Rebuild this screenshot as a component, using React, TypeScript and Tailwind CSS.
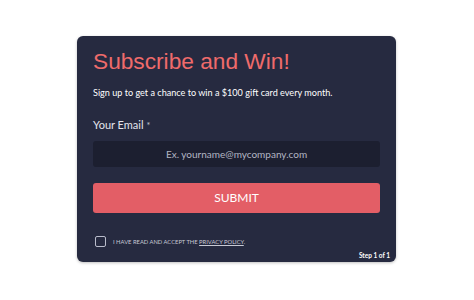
import React, { useState } from 'react';

export default function App() {
  const [checked, setChecked] = useState(false);

  return (
    <div className="w-[474px] h-[300px] bg-white pt-[36px] pl-[77px]">
      <div className="w-[319px] h-[226px] rounded-[6px] bg-[#262a40] shadow-[0_1px_3px_rgba(0,0,0,0.25)] px-[16px] pt-[11px] flex flex-col">
        <h1 className="font-['Liberation_Sans',Arial,sans-serif] text-[22.7px] leading-[28px] text-[#ef6b6b]">
          Subscribe and Win!
        </h1>
        <p className="mt-[12px] font-['Lato',sans-serif] text-[9.1px] leading-[12px] text-white">
          Sign up to get a chance to win a $100 gift card every month.
        </p>
        <label className="mt-[19px] font-['Lato',sans-serif] text-[11px] leading-[14px] text-[#e4e5ec]">
          Your Email <span className="text-[#c4c6d2] text-[9px]">*</span>
        </label>
        <div className="mt-[8px] h-[26px] rounded-[3px] bg-[#1c1f30] flex items-center justify-center">
          <span className="font-['Lato',sans-serif] text-[10px] text-[#b3b6c4]">Ex. yourname@mycompany.com</span>
        </div>
        <button className="mt-[16px] h-[30px] rounded-[3px] bg-[#e35e66] flex items-center justify-center font-['Lato',sans-serif] text-[12px] text-white">
          SUBMIT
        </button>
        <div className="mt-[23px] flex items-center gap-[7px] pl-[2px]">
          <button
            onClick={() => setChecked(!checked)}
            className="w-[11px] h-[11px] rounded-[2px] border border-[#b9bccb]"
          />
          <span className="font-['Lato',sans-serif] text-[5.8px] leading-[9px] text-[#c7c9d4]">
            I HAVE READ AND ACCEPT THE <span className="underline">PRIVACY POLICY</span>.
          </span>
        </div>
        <div className="mt-[4px] self-end -mr-[10px] font-['Lato',sans-serif] font-bold text-[6.5px] leading-[9px] text-white">
          Step 1 of 1
        </div>
      </div>
    </div>
  );
}
